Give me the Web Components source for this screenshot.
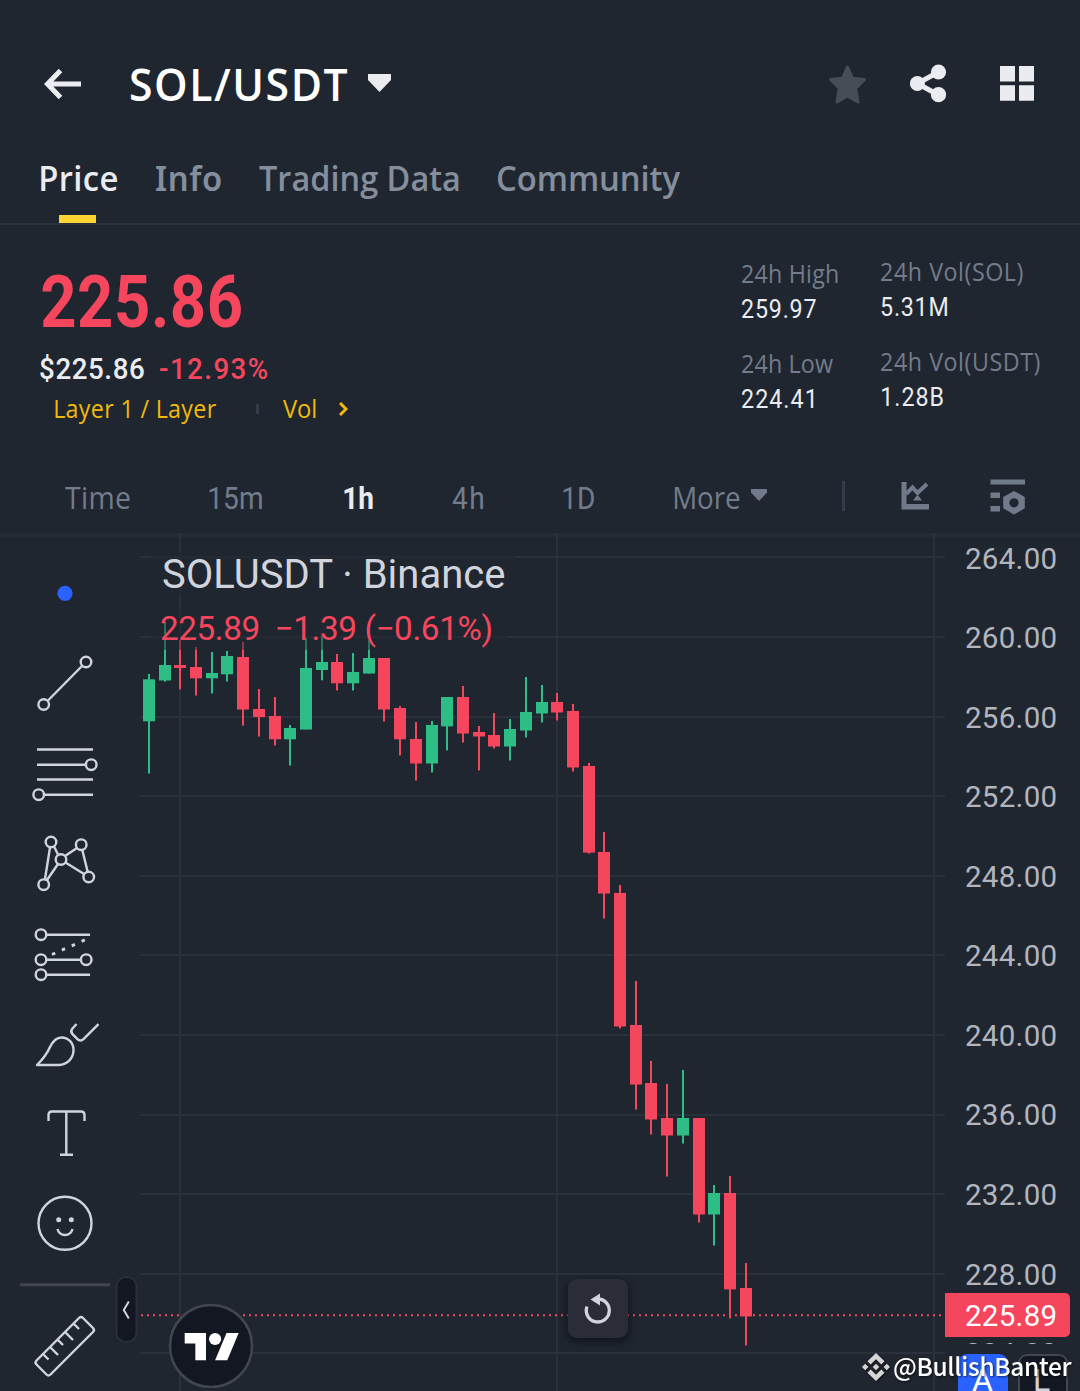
<!DOCTYPE html>
<html lang="en">
<head>
<meta charset="utf-8">
<title>SOL/USDT</title>
<style>
html,body{margin:0;background:#202630}
body{width:1080px;height:1391px;overflow:hidden}
</style>
</head>
<body>
<market-page></market-page>
<script>
const define = (name, html, ready) => {
  const tpl = document.createElement('template');
  tpl.innerHTML = html;
  customElements.define(name, class extends HTMLElement {
    constructor() {
      super();
      this.attachShadow({mode: 'open'}).append(tpl.content.cloneNode(true));
    }
    connectedCallback() { if (ready) ready.call(this); }
  });
};

/* Text whose box is its ink: w = ink width, h = cap height, size = font size, sx = horizontal scale. */
const ctx = document.createElement('canvas').getContext('2d');
define('fit-text', `<style>
:host{display:block;flex:none;white-space:pre;font-family:"Open Sans","Noto Sans",sans-serif}
:host([num]){font-family:Roboto,sans-serif}
span{display:inline-block;transform-origin:0 50%;vertical-align:top}
</style><span><slot></slot></span>`, function () {
  const n = k => parseFloat(this.getAttribute(k));
  const text = this.textContent, size = n('size'), h = n('h'), w = n('w'), sx = n('sx') || 1;
  this.style.cssText += `;font-size:${size}px;width:${w}px;height:${h}px;line-height:${h}px`;
  const cs = getComputedStyle(this);
  ctx.font = `${cs.fontWeight} ${size}px ${cs.fontFamily}`;
  const m = ctx.measureText(text);
  const ink = m.actualBoundingBoxLeft + m.actualBoundingBoxRight;
  const ls = (w / sx - ink) / Math.max(1, text.length - 1);
  const base = h / 2 + (m.fontBoundingBoxAscent - m.fontBoundingBoxDescent) / 2;
  const s = this.shadowRoot.querySelector('span');
  s.style.letterSpacing = ls + 'px';
  s.style.transform = `translate(${m.actualBoundingBoxLeft * sx}px,${Math.round(h - base)}px) scaleX(${sx})`;
});

define('page-header', `<style>
:host{display:flex;box-sizing:border-box;height:140px;padding:28px 46px 0 44px;align-items:center;color:#fff}
svg{display:block;flex:none}
.title{margin:2px 20px 0 50px;font-weight:650}
.actions{display:flex;align-items:center;margin-left:auto}
</style>
<svg width="37" height="30" viewBox="44 69 37 30" fill="none" stroke="#eaecef" stroke-width="5"><path d="M81 84H48M60.500 70.500 47.500 84l13 13.500"/></svg>
<fit-text class="title" size="44.500" w="216.500" h="32" sx=".96">SOL/USDT</fit-text>
<svg style="margin-top:-2px" width="23" height="18" viewBox="0 0 23 18" fill="#eaecef"><path d="M0 0h23v6L11.500 18 0 6z"/></svg>
<div class="actions">
<svg width="38" height="39" viewBox="0.500 0 38 39"><path d="M19 2l5 11.200 12 1.300-8.800 8.700L29.500 37 19 31 8.500 37l2.300-13.800L2 14.500l12-1.300z" fill="#474d57" stroke="#474d57" stroke-width="3" stroke-linejoin="round"/></svg>
<svg style="margin-left:43px" width="37" height="40" viewBox="910 64 37 40" fill="#eaecef"><path d="M938.500 72 917.400 83.500 938.500 95" fill="none" stroke="#eaecef" stroke-width="5"/><circle cx="917.400" cy="83.500" r="7.500"/><circle cx="938.500" cy="72" r="7.600"/><circle cx="938.500" cy="94.700" r="7.600"/></svg>
<svg style="margin:-1px 0 0 53px" width="34" height="35" viewBox="0 0 34 35" fill="#eaecef"><path d="M0 0h15v15.500H0zM19 0h15v15.500H19zM0 19.200h15v15.500H0zM19 19.200h15v15.500H19z"/></svg>
</div>`);

define('page-tabs', `<style>
:host{display:flex;box-sizing:border-box;height:85px;padding:26px 0 0 41px;border-bottom:2px solid #2b313b;color:#848e9c;font-weight:600}
.tab{margin-right:38px}
.on{color:#eaecef}
i{display:block;width:37px;height:8px;margin:24px 0 0 18px;background:#fcd535}
</style>
<div class="tab on"><fit-text size="34.500" w="76.500" h="25" sx=".95">Price</fit-text><i></i></div>
<div class="tab"><fit-text style="font-family:'Noto Sans'" size="34.500" w="65" h="25" sx=".95">Info</fit-text></div>
<div class="tab"><fit-text size="34.500" w="200" h="25" sx=".94">Trading Data</fit-text></div>
<div class="tab"><fit-text style="margin-left:1px" size="34.500" w="182.500" h="25" sx=".95">Community</fit-text></div>`);

define('stat-item', `<style>
:host{display:flex;flex-direction:column;gap:17px;color:#eaecef}
::slotted([slot=label]){color:#737c8b}
</style><slot name="label"></slot><slot></slot>`);

define('price-summary', `<style>
:host{display:flex;box-sizing:border-box;height:235px;color:#eaecef}
.left{width:702px;padding:51px 0 0 39px;flex:none}
.row{display:flex;align-items:center}
.red{color:#f6465d}.gold{color:#f0b90b}
.sep{width:3px;height:10px;margin:0 24px 0 40px;background:#363c47}
.col{display:flex;flex-direction:column;gap:37px;width:139px;padding-top:40px;margin-left:1px}
.col.b{padding-top:38px;margin-left:0}
svg{display:block;margin-left:23px}
</style>
<div class="left">
<fit-text num class="red" style="margin-left:3px;font-weight:700" size="72" w="199" h="51" sx=".88">225.86</fit-text>
<div class="row" style="margin-top:31px"><fit-text num style="margin-left:1px;font-weight:500" size="29.500" w="104" h="21" sx=".94">$225.86</fit-text><fit-text num class="red" style="margin-left:16px;font-weight:500" size="29.500" w="107.500" h="21" sx=".94">-12.93%</fit-text></div>
<div class="row gold" style="margin:21px 0 0 16px"><fit-text size="25" w="161" h="18" sx=".93">Layer 1 / Layer</fit-text><span class="sep"></span><fit-text size="25" w="33" h="18" sx=".95">Vol</fit-text><svg width="9" height="14" viewBox="0 0 9 14" fill="none" stroke="#f0b90b" stroke-width="3"><path d="M1 1l6 6-6 6"/></svg></div>
</div>
<div class="col">
<stat-item><fit-text slot="label" size="25" w="96" h="18" sx=".93">24h High</fit-text><fit-text num size="25" w="73.500" h="18" sx=".93">259.97</fit-text></stat-item>
<stat-item><fit-text slot="label" size="25" w="91.500" h="18" sx=".93">24h Low</fit-text><fit-text num size="25" w="71" h="18" sx=".93">224.41</fit-text></stat-item>
</div>
<div class="col b">
<stat-item><fit-text slot="label" size="25" w="142" h="18" sx=".93">24h Vol(SOL)</fit-text><fit-text num size="25" w="66" h="18" sx=".93">5.31M</fit-text></stat-item>
<stat-item><fit-text slot="label" size="25" w="159" h="18" sx=".93">24h Vol(USDT)</fit-text><fit-text num style="margin-left:1px" size="25" w="61.500" h="18" sx=".93">1.28B</fit-text></stat-item>
</div>`);

define('interval-bar', `<style>
:host{display:flex;box-sizing:border-box;height:77px;padding:27px 0 0 65px;border-bottom:4px solid #252b35;color:#737c8b;align-items:flex-start}
fit-text{margin-right:var(--g)}
svg{display:block;flex:none}
b{width:3px;height:30px;margin:-6px 56px 0 75px;background:#363c47}
</style>
<fit-text style="--g:79px" size="30.500" w="65" h="22" sx=".93">Time</fit-text>
<fit-text style="--g:82px" num size="30.500" w="53" h="22" sx=".92">15m</fit-text>
<fit-text style="--g:79px;color:#eaecef;font-weight:700" num size="30.500" w="29" h="22" sx=".92">1h</fit-text>
<fit-text style="--g:80px" num size="30.500" w="31" h="22" sx=".92">4h</fit-text>
<fit-text style="--g:79px" num size="30.500" w="31.500" h="22" sx=".92">1D</fit-text>
<fit-text style="--g:12px" size="30.500" w="65.500" h="22" sx=".91">More</fit-text>
<svg style="margin-top:2px" width="16" height="12" viewBox="0 0 16 12" fill="#707a8a"><path d="M0 0h16v3.500L8 12 0 3.500z"/></svg>
<b></b>
<svg style="margin:-5px 60px 0 0" width="29" height="28" viewBox="901 482 29 28" fill="#707a8a"><path d="M901.500 482h5v22h22.500v5.500h-27.500z"/><path d="M906 494l6.500-6.500 5 5.500 9.500-9" fill="none" stroke="#707a8a" stroke-width="4"/><path d="M913 500.500l4.500-6 4.500 6z"/></svg>
<svg style="margin-top:-8px" width="36" height="36" viewBox="990 479 36 36" fill="#707a8a"><path d="M990.500 479.500h34.500v5h-34.500zM990.500 492.500h9.500v5.500h-9.500zM990.500 506h9.500v5.500h-9.500z"/><path fill-rule="evenodd" d="M1014 491l10.800 6v11.300l-10.800 6.300-10.800-6.300V497zm0 7.200a4.600 4.600 0 1 0 .01 0z"/></svg>`);

define('drawing-tools', `<style>
:host{display:flex;flex-direction:column;width:140px;height:858px;flex:none}
svg{display:block;flex:none;fill:none;stroke:#d1d4dc;stroke-width:2.400}
</style>
<svg width="140" height="105" viewBox="0 533 140 105"><circle cx="65" cy="593.300" r="7.600" fill="#2962ff" stroke="none"/></svg>
<svg width="140" height="90" viewBox="0 638 140 90"><circle cx="86" cy="662" r="5.300"/><circle cx="43.700" cy="704.500" r="5.300"/><path d="M82 666 48 700.500"/></svg>
<svg width="140" height="90" viewBox="0 728 140 90"><path d="M37 749.500h56M37 764.700h48M37 779.500h56M44 794.700h49"/><circle cx="91.200" cy="764.700" r="5.300"/><circle cx="38.700" cy="794.700" r="5.300"/></svg>
<svg width="140" height="90" viewBox="0 818 140 90"><circle cx="51" cy="842" r="5.300"/><circle cx="81.200" cy="844.700" r="5.300"/><circle cx="61" cy="859.500" r="5.300"/><circle cx="43.700" cy="884.700" r="5.300"/><circle cx="88.700" cy="877" r="5.300"/><path d="M50 847.500 45 879M54 846.500l4 8M65 856l12-8M82.300 850l5.300 21.500M65.500 862.500 84 874M58 864l-11 16"/></svg>
<svg width="140" height="90" viewBox="0 908 140 90"><circle cx="41" cy="934.700" r="5.300"/><circle cx="41" cy="959.700" r="5.300"/><circle cx="86.200" cy="959.700" r="5.300"/><circle cx="41" cy="974.700" r="5.300"/><path d="M46.500 934.700H90M46.500 959.700H81M46.500 974.700H90"/><path stroke-width="3" stroke-dasharray="3.500 7.300" d="M52 954.500 87 939"/></svg>
<svg width="140" height="90" viewBox="0 998 140 90" stroke-linejoin="round"><path d="M37 1065c5-5 10-11 13-18 3-6 6-9.500 11.500-9.500 6.500 0 12 5 12 12.500 0 8-6 14.500-14.500 15zM76.500 1024l-4 4.500c-1.500 1.700-1.500 4 0 5.700l5 5c1.800 1.800 4.200 1.800 6 0l15-15"/></svg>
<svg width="140" height="90" viewBox="0 1088 140 90"><path d="M48.500 1121v-6q0-3.500 3.500-3.500h29q3.500 0 3.500 3.500v6M66.300 1112v43M60 1154.700h13"/></svg>
<svg width="140" height="90" viewBox="0 1178 140 90"><circle cx="65" cy="1223.300" r="26.500"/><circle cx="58.700" cy="1219.700" r="2.500" fill="#d1d4dc" stroke="none"/><circle cx="71.300" cy="1219.700" r="2.500" fill="#d1d4dc" stroke="none"/><path d="M57.500 1229c2 8 13 8 15 0"/></svg>
<svg width="140" height="123" viewBox="0 1268 140 123"><path d="M20 1284.700h90" stroke="#434651" stroke-width="3"/><path stroke-linejoin="round" d="M79 1318q2-2 4 0l10 10q2 2 0 4l-42.500 42.500q-2 2-4 0l-10-10q-2-2 0-4zM43.500 1354.500l5 5M50.500 1347.500l7.500 7.500M58 1340l5 5M65.500 1332.500l7.500 7.500M74 1324l5 5"/></svg>`);

const candles = `149g674,679.3,721.3,773.5 165g622,665,680.5,681.7 180r640,665,668,689.3 196r647,667,678.3,695.5 212g652,673,678.3,693.5 227g651,656,674.3,681.5 243r642,657,709.5,725.5 259r689,709,717,736.5 275r697,716,739.3,745.5 290g725,728,739.3,765.5 306g638,668,729.5,729.5 322g634,662,670,680.3 337r654,662,683.3,690.5 353g653,672,683.3,690.5 369g640,658,673.5,673.5 384r658,658,709.5,721.5 400r706,708,739.3,755.5 416r722,739,763.5,780.5 432g721,725,763.5,772.5 447g697,697,726.4,750.4 463r686,697,733.5,742.5 479r726,732,736.5,770.5 494r713,735,746.5,748.5 510g719,729,746.5,760.5 526g677,712,730.5,737.5 542g685,702,713.5,722.5 557r693,702,712.5,720.5 573r704,711,767.5,771.5 589r763,766,852.6,853.6 604r832,852,893.5,918.5 620r885,893,1026.5,1028.5 636r981,1025,1084.5,1109.5 651r1061,1083,1119.5,1134.5 667r1084,1118,1135.5,1176.5 683g1070,1118,1135.5,1143.5 699r1118,1118,1214.5,1222.5 714g1185,1193,1214.5,1245.5 730r1176,1193,1289.4,1318.4 746r1263,1288,1316.4,1345.4`;

define('candle-pane', `<style>
:host{display:block;position:relative;width:805px;height:858px;flex:none;color:#f6465d}
svg{display:block}
.legend{position:absolute;left:10px;top:18px;display:flex;flex-direction:column;align-items:flex-start;gap:11px}
.legend>div{display:flex;box-sizing:border-box;background:rgba(32,38,48,.5)}
.l1{width:366px;height:46px;padding:8px 0 0 13px;color:#d1d4dc}
.l2{width:358px;height:42px;padding:8px 0 0 11px;gap:18px}
.reset{position:absolute;left:428px;top:746px;width:60px;height:59px;border-radius:9px;background:#2a2d38;box-shadow:0 3px 8px 1px rgba(5,8,14,.6)}
.tv{position:absolute;left:28px;top:769px}
.handle{position:absolute;left:-25px;top:743px}
</style>
<svg id="plot" width="805" height="858" viewBox="140 533 805 858"></svg>
<div class="legend"><div class="l1"><fit-text num size="40" w="342" h="29">SOLUSDT · Binance</fit-text></div>
<div class="l2"><fit-text num size="33.300" w="97.500" h="24">225.89</fit-text><fit-text num size="33.300" w="215" h="24">−1.39 (−0.61%)</fit-text></div></div>
<svg class="handle" width="23" height="68" viewBox="0 0 23 68"><rect x="1.500" y="1" width="20" height="65" rx="9.500" fill="#131722" stroke="#2a2e39" stroke-width="2"/><path d="M13.800 25.500 8.800 34l5 8.500" fill="none" stroke="#d1d4dc" stroke-width="2"/></svg>
<svg class="tv" width="86" height="86" viewBox="0 0 86 86"><circle cx="43" cy="44" r="41" fill="#131722" stroke="#434651" stroke-width="2.500"/><g transform="translate(16.700 24.800) scale(1.520)" fill="#fff"><path d="M14 22H7V11H0V4h14v18zM28 22h-8l7.500-18h8L28 22z"/><circle cx="20" cy="8" r="4"/></g></svg>
<div class="reset"><svg width="60" height="59" viewBox="568 1279 60 59"><path d="M587 1306.500a11.500 11.500 0 1 0 10.500-7.500" fill="none" stroke="#d1d4dc" stroke-width="3.300"/><path d="M600 1293.500v12l-9.500-6z" fill="#d1d4dc"/></svg></div>`, function () {
  let s = '<g fill="#2b313b">';
  for (let i = 0; i < 11; i++) s += `<rect x="140" y="${Math.round(556.3 + i * 79.6)}" width="805" height="2"/>`;
  for (const x of [179, 556, 933]) s += `<rect x="${x}" y="533" width="2" height="858"/>`;
  s += '</g><path d="M141 1315.300H945" stroke="#f6465d" stroke-width="2" stroke-dasharray="2 4"/>';
  for (const c of candles.split(' ')) {
    const x = +c.slice(0, 3), [a, b, d, e] = c.slice(4).split(',').map(Number);
    s += `<g fill="${c[3] === 'g' ? '#2ebd85' : '#f6465d'}"><rect x="${x - 1}" y="${a}" width="2" height="${e - a}"/><rect x="${x - 6}" y="${b}" width="12" height="${d - b}"/></g>`;
  }
  this.shadowRoot.querySelector('#plot').innerHTML = s;
});

define('price-axis', `<style>
:host{display:block;position:relative;width:135px;height:858px;color:#b2b5be}
.scale{display:flex;flex-direction:column;box-sizing:border-box;height:811px;padding:14.600px 0 0 21px;gap:58.550px;overflow:hidden}
.tag{position:absolute;left:0;top:760px;width:125px;height:44px;box-sizing:border-box;padding:13px 0 0 21px;border-radius:0 5px 5px 0;background:#f6465d;color:#fff}
.modes{display:flex;gap:10px;margin:10px 0 0 13px;height:37px;overflow:hidden}
.modes div{box-sizing:border-box;width:50px;height:50px;border-radius:9px;flex:none;padding:14px 0 0 14px;color:#fff;background:#2962ff}
.modes .l{background:#131722;border:2px solid #434651;padding:12px 0 0 15px;color:#d1d4dc}
</style>
<div class="scale"></div>
<div class="tag"><fit-text num size="29.500" w="89.500" h="20.500">225.89</fit-text></div>
<div class="modes"><div><fit-text num size="32" w="21" h="23">A</fit-text></div><div class="l"><fit-text num size="32" w="15" h="23">L</fit-text></div></div>`, function () {
  let s = '';
  for (let p = 264; p >= 224; p -= 4) s += `<fit-text num size="29.500" w="89.500" h="21">${p}.00</fit-text>`;
  this.shadowRoot.querySelector('.scale').innerHTML = s;
});

define('chart-area', `<style>:host{display:flex;height:858px;margin-top:-4px;position:relative}</style>
<drawing-tools></drawing-tools><candle-pane></candle-pane><price-axis></price-axis>`);

define('author-mark', `<style>
:host{position:absolute;left:862px;top:1353px;display:flex;color:#fff;filter:drop-shadow(1px 1px 1px rgba(0,0,0,.6))}
fit-text{font-family:"Noto Sans CJK SC",sans-serif;margin:6px 0 0 4px;font-weight:500}
</style>
<svg width="28" height="28" viewBox="0 0 28 28" fill="#d6d6d6"><path d="M14 0l8.500 8.300-3.200 3.200L14 6.300l-5.300 5.200-3.200-3.200zM14 28l-8.500-8.300 3.200-3.200 5.300 5.200 5.300-5.200 3.200 3.200zM14 10.700l3.300 3.300-3.300 3.300-3.300-3.300zM3.200 10.800 6.400 14l-3.200 3.200L0 14zM24.800 10.800 28 14l-3.200 3.200-3.200-3.200z"/></svg>
<fit-text size="24.500" w="178.500" h="17">@BullishBanter</fit-text>`);

define('market-page', `<style>:host{display:flex;flex-direction:column;position:relative;width:1080px;height:1391px;overflow:hidden;background:#202630}</style>
<page-header></page-header><page-tabs></page-tabs><price-summary></price-summary><interval-bar></interval-bar><chart-area></chart-area><author-mark></author-mark>`);
</script>
</body>
</html>
